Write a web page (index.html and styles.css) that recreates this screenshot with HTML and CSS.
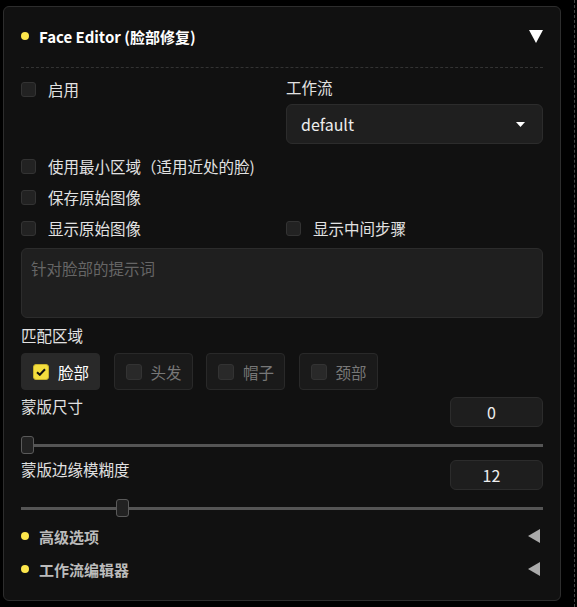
FILE: index.html
```html
<!DOCTYPE html>
<html lang="zh">

<head>
  <meta charset="UTF-8">
  <meta name="viewport" content="width=device-width, initial-scale=1.0">
  <title>Face Editor</title>
  <link rel="stylesheet" href="styles.css">
</head>

<body>
  <div class="page">
    <div class="panel">
      <div class="head">
        <span class="dot"></span>
        <span class="title">Face Editor (脸部修复)</span>
        <svg class="arrow" width="14" height="13" viewBox="0 0 14 13"><path d="M0 0H14L7 13Z" fill="#fff"/></svg>
      </div>
      <div class="sep"></div>

      <div class="grid top">
        <label class="check first"><span class="box"></span>启用</label>
        <div>
          <div class="label">工作流</div>
          <div class="select">
            <span>default</span>
            <svg width="9" height="5" viewBox="0 0 9 5"><path d="M0 0H9L4.5 5Z" fill="#fff"/></svg>
          </div>
        </div>
      </div>

      <label class="check opt first-opt"><span class="box"></span>使用最小区域（适用近处的脸)</label>
      <label class="check opt"><span class="box"></span>保存原始图像</label>
      <div class="grid opt">
        <label class="check"><span class="box"></span>显示原始图像</label>
        <label class="check"><span class="box"></span>显示中间步骤</label>
      </div>

      <div class="prompt">针对脸部的提示词</div>

      <div class="label area-label">匹配区域</div>
      <div class="chips">
        <div class="chip on">
          <span class="box">
            <svg width="10" height="8" viewBox="0 0 10 8"><path d="M1 4.2L3.8 6.8L9 1.2" stroke="#111" stroke-width="2" fill="none"/></svg>
          </span>脸部
        </div>
        <div class="chip"><span class="box"></span>头发</div>
        <div class="chip"><span class="box"></span>帽子</div>
        <div class="chip"><span class="box"></span>颈部</div>
      </div>

      <div class="num-row first-num">
        <div class="label">蒙版尺寸</div>
        <div class="num">0</div>
      </div>
      <div class="slider">
        <div class="track"></div>
        <div class="thumb" style="left: 0%"></div>
      </div>

      <div class="num-row">
        <div class="label">蒙版边缘模糊度</div>
        <div class="num">12</div>
      </div>
      <div class="slider">
        <div class="track"></div>
        <div class="thumb" style="left: 18.2%"></div>
      </div>

      <div class="section first-section">
        <span class="dot"></span>
        <span class="sec-title">高级选项</span>
        <svg width="12" height="14" viewBox="0 0 12 14"><path d="M12 0V14L0 7Z" fill="#aaa"/></svg>
      </div>
      <div class="section">
        <span class="dot"></span>
        <span class="sec-title">工作流编辑器</span>
        <svg width="12" height="14" viewBox="0 0 12 14"><path d="M12 0V14L0 7Z" fill="#aaa"/></svg>
      </div>
    </div>
  </div>
</body>

</html>
```

FILE: styles.css
```css
* {
  box-sizing: border-box;
}

body {
  margin: 0;
  background: #000;
  color: #ddd;
  font-family: "Noto Sans CJK SC", "Noto Sans", sans-serif;
  font-size: 15.5px;
}

.page {
  width: 575px;
  min-height: 607px;
  padding: 6px 0 0 3px;
  border-right: 1px dashed #444;
}

.panel {
  width: 558px;
  height: 595px;
  padding: 0 17px;
  background: #111;
  border: 1px solid #2d2d2d;
  border-radius: 6px;
}

.head {
  display: flex;
  align-items: center;
  height: 24px;
  margin-top: 17px;
}

.dot {
  width: 8px;
  height: 8px;
  margin-right: 10px;
  border-radius: 50%;
  background: #fde74c;
}

.title {
  flex: 1;
  color: #fff;
  font-size: 15px;
  font-weight: 700;
}

.sep {
  margin-top: 19px;
  border-top: 1px dashed #333;
}

.grid {
  display: grid;
  grid-template-columns: 1fr 1fr;
  column-gap: 8px;
}

.top {
  margin-top: 10px;
}

.label {
  height: 20px;
  line-height: 19px;
  color: #e2e2e2;
}

.check {
  display: flex;
  align-items: center;
  gap: 12px;
  height: 20px;
  line-height: 19px;
  color: #e2e2e2;
}

.check.first {
  margin-top: 1px;
}

.box {
  display: flex;
  align-items: center;
  justify-content: center;
  width: 15px;
  height: 15px;
  flex: none;
  background: #222;
  border: 1px solid #333;
  border-radius: 3px;
}

.select {
  display: flex;
  align-items: center;
  justify-content: space-between;
  height: 40px;
  margin-top: 6px;
  padding: 0 17px 0 14px;
  background: #1f1f1f;
  border: 1px solid #2c2c2c;
  border-radius: 6px;
  color: #eee;
  font-size: 16px;
}

.opt {
  margin-top: 11px;
}

.first-opt {
  margin-top: 12px;
}

.prompt {
  height: 70px;
  margin-top: 10px;
  padding: 8px 9px;
  line-height: 22px;
  background: #1f1f1f;
  border: 1px solid #2c2c2c;
  border-radius: 6px;
  color: #666;
}

.area-label {
  margin-top: 8px;
}

.chips {
  display: flex;
  gap: 13.5px;
  margin-top: 7px;
}

.chip {
  display: flex;
  align-items: center;
  gap: 9px;
  width: 79px;
  height: 37px;
  padding-left: 11px;
  background: #1a1a1a;
  border: 1px solid #292929;
  border-radius: 4px;
  color: #777;
}

.chip .box {
  width: 16px;
  height: 16px;
  background: #292929;
}

.chip.on {
  background: #292929;
  color: #fff;
}

.chip.on .box {
  background: #f4de3e;
  border-color: #c7b22c;
}

.num-row {
  display: flex;
  justify-content: space-between;
  margin-top: 6px;
}

.first-num {
  margin-top: 7px;
}

.num {
  width: 93px;
  height: 30px;
  padding-right: 10px;
  line-height: 28px;
  text-align: center;
  background: #1e1e1e;
  border: 1px solid #2c2c2c;
  border-radius: 6px;
  color: #eee;
  font-size: 16px;
}

.slider {
  position: relative;
  height: 18px;
  margin-top: 9px;
}

.track {
  position: absolute;
  left: 0;
  right: 0;
  top: 8px;
  height: 3px;
  background: #555;
}

.thumb {
  position: absolute;
  top: 0;
  width: 13px;
  height: 18px;
  background: #222;
  border: 1px solid #5a5a5a;
  border-radius: 3px;
}

.section {
  display: flex;
  align-items: center;
  height: 24px;
  margin-top: 9px;
  padding-right: 3px;
}

.first-section {
  margin-top: 7px;
}

.sec-title {
  flex: 1;
  color: #bbb;
  font-size: 15px;
  font-weight: 700;
  line-height: 23px;
}
```
